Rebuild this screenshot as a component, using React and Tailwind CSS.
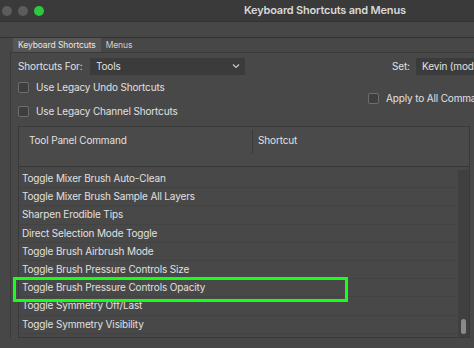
import React from 'react'

const rows = [
  'Toggle Mixer Brush Auto-Clean',
  'Toggle Mixer Brush Sample All Layers',
  'Sharpen Erodible Tips',
  'Direct Selection Mode Toggle',
  'Toggle Brush Airbrush Mode',
  'Toggle Brush Pressure Controls Size',
  'Toggle Brush Pressure Controls Opacity',
  'Toggle Symmetry Off/Last',
  'Toggle Symmetry Visibility',
]

function Checkbox({ label }) {
  return (
    <label className="flex items-center gap-[7px] whitespace-nowrap">
      <span className="h-[11px] w-[11px] shrink-0 rounded-[2px] border border-[#6e6e6e] bg-[#3e3e3e]" />
      <span>{label}</span>
    </label>
  )
}

function Chevron() {
  return (
    <svg width="8" height="6" viewBox="0 0 8 6" fill="none" stroke="#c8c8c8" strokeWidth="1.2">
      <path d="M1 1.5 L4 4.5 L7 1.5" />
    </svg>
  )
}

export default function App() {
  return (
    <div className="relative h-[348px] w-[474px] overflow-hidden bg-[#474747] text-[10px] tracking-[-0.15px] text-[#e0e0e0] font-['Inter',sans-serif]">
      {/* title bar */}
      <div className="relative flex h-[21px] items-center bg-[#3a3a3a]">
        <div className="flex gap-[6px] pl-[2px]">
          <span className="h-[10px] w-[10px] rounded-full bg-[#5c5c5c]" />
          <span className="h-[10px] w-[10px] rounded-full bg-[#5c5c5c]" />
          <span className="h-[10px] w-[10px] rounded-full bg-[#2bc840]" />
        </div>
        <span className="ml-[200px] whitespace-nowrap text-[11px] font-semibold tracking-[-0.2px] text-[#d8d8d8]">Keyboard Shortcuts and Menus</span>
      </div>
      <div className="h-[17px] border-y border-[#333] bg-[#474747]" />

      <div className="pl-[10px]">
        {/* tabs */}
        <div className="flex h-[14px] items-end pl-[3px] text-[8.5px] tracking-[-0.1px]">
          <div className="flex h-[14px] items-center bg-[#565656] px-[5px] text-[#e6e6e6]">Keyboard Shortcuts</div>
          <div className="flex h-[14px] items-center px-[5px] text-[#d0d0d0]">Menus</div>
        </div>

        <div className="border-l border-t border-[#3a3a3a] bg-[#484848] pl-[7px] pt-[4px]">
          {/* shortcuts for */}
          <div className="flex h-[18px] items-center whitespace-nowrap">
            <span className="w-[72px] shrink-0">Shortcuts For:</span>
            <div className="flex h-[17px] w-[155px] shrink-0 items-center justify-between bg-[#3b3b3b] pl-[6px] pr-[5px]">
              <span>Tools</span>
              <Chevron />
            </div>
            <span className="ml-[147px] w-[24px] shrink-0">Set:</span>
            <div className="flex h-[17px] flex-1 items-center bg-[#3b3b3b] pl-[6px]">Kevin (modified)</div>
          </div>

          {/* checkboxes */}
          <div className="mt-[5px] flex">
            <div className="flex w-[350px] shrink-0 flex-col gap-[9px]">
              <Checkbox label="Use Legacy Undo Shortcuts" />
              <Checkbox label="Use Legacy Channel Shortcuts" />
            </div>
            <div className="pt-[11px]">
              <Checkbox label="Apply to All Commands" />
            </div>
          </div>

          {/* table */}
          <div className="mt-[7px] mr-[4px] h-[212px] border border-[#3a3a3a]">
            <div className="flex h-[40px] border-b border-[#383838] bg-[#4a4a4a]">
              <div className="w-[233px] pl-[10px] pt-[6px]">Tool Panel Command</div>
              <div className="mt-[3px] h-[24px] border-l border-[#3a3a3a] pl-[5px] pt-[3px]">Shortcut</div>
            </div>
            <div className="flex h-[170px] pt-[3px]">
              <div className="flex-1">
                {rows.map((r) => (
                  <div key={r} className="flex h-[18.2px] items-center border-b border-[#434343] pl-[3px] whitespace-nowrap">
                    {r}
                  </div>
                ))}
              </div>
              <div className="relative w-[11px] bg-[#404040]">
                <div className="absolute bottom-[3px] left-[3px] h-[15px] w-[5px] rounded-full bg-[#8a8a8a]" />
              </div>
            </div>
          </div>
        </div>
      </div>

      {/* annotation */}
      <div className="absolute left-[13px] top-[277px] h-[25px] w-[335px] border-[3px] border-[#16ff16]" />
    </div>
  )
}
